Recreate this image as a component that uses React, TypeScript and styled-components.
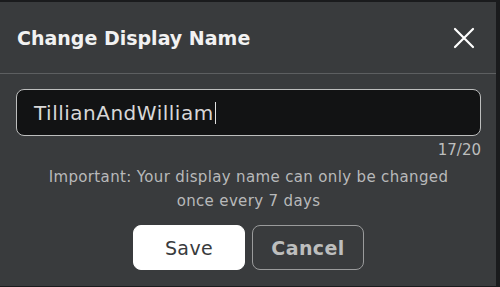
import React from "react";
import styled, { createGlobalStyle } from "styled-components";

const Global = createGlobalStyle`
  html, body { margin: 0; padding: 0; background: #1a1b1d; }
  body { width: 500px; height: 287px; overflow: hidden; font-family: "DejaVu Sans", "Noto Sans", sans-serif; }
`;

const Page = styled.div`
  width: 500px;
  height: 287px;
  padding: 2px 4px 1px 0;
  box-sizing: border-box;
`;

const Modal = styled.div`
  height: 100%;
  background: #393b3d;
  display: flex;
  flex-direction: column;
`;

const Header = styled.div`
  height: 72px;
  display: flex;
  align-items: center;
  justify-content: space-between;
  padding: 0 20px 0 17px;
  border-bottom: 1px solid #5d5f61;
  box-sizing: border-box;
`;

const Title = styled.h1`
  margin: 0;
  font-family: "DejaVu Sans", sans-serif;
  font-weight: 700;
  font-size: 19px;
  color: #f2f2f2;
`;

const Close = styled.button`
  background: none;
  border: none;
  padding: 0;
  width: 24px;
  height: 24px;
  display: flex;
  align-items: center;
  justify-content: center;
  cursor: pointer;
`;

const Body = styled.div`
  padding: 15px 15px 0 16px;
  display: flex;
  flex-direction: column;
`;

const InputBox = styled.div`
  height: 47px;
  border: 1px solid #bdbebe;
  border-radius: 8px;
  background: #121314;
  display: flex;
  align-items: center;
  padding: 0 17px;
  box-sizing: border-box;
`;

const InputText = styled.span`
  font-family: "DejaVu Sans", sans-serif;
  font-size: 20px;
  letter-spacing: 0.5px;
  color: #d8d8d8;
`;

const Caret = styled.span`
  display: inline-block;
  width: 1px;
  height: 22px;
  background: #e0e0e0;
  margin-left: 1px;
`;

const Counter = styled.div`
  text-align: right;
  font-size: 15px;
  color: #bdbebe;
  margin-top: 5px;
  line-height: 18px;
`;

const Note = styled.p`
  margin: 6px 0 0;
  text-align: center;
  font-size: 15px;
  letter-spacing: 0.35px;
  line-height: 24px;
  color: #b8b9ba;
`;

const Actions = styled.div`
  display: flex;
  justify-content: center;
  gap: 7px;
  margin-top: 12px;
`;

const Btn = styled.button<{ $primary?: boolean }>`
  width: 112px;
  height: 45px;
  border-radius: 8px;
  box-sizing: border-box;
  font-family: "DejaVu Sans", sans-serif;
  font-size: 19px;
  letter-spacing: 0.4px;
  cursor: pointer;
  background: ${(p) => (p.$primary ? "#ffffff" : "transparent")};
  color: ${(p) => (p.$primary ? "#393b3d" : "#bdbebe")};
  border: 1px solid ${(p) => (p.$primary ? "#ffffff" : "#9a9b9c")};
  font-weight: ${(p) => (p.$primary ? 400 : 700)};
`;

export default function App() {
  return (
    <>
      <Global />
      <Page>
        <Modal>
          <Header>
            <Title>Change Display Name</Title>
            <Close aria-label="Close">
              <svg width="22" height="22" viewBox="0 0 22 22">
                <path d="M2 2 L20 20 M20 2 L2 20" stroke="#ffffff" strokeWidth="2.2" strokeLinecap="round" />
              </svg>
            </Close>
          </Header>
          <Body>
            <InputBox>
              <InputText>TillianAndWilliam</InputText>
              <Caret />
            </InputBox>
            <Counter>17/20</Counter>
            <Note>
              Important: Your display name can only be changed
              <br />
              once every 7 days
            </Note>
            <Actions>
              <Btn $primary>Save</Btn>
              <Btn>Cancel</Btn>
            </Actions>
          </Body>
        </Modal>
      </Page>
    </>
  );
}
